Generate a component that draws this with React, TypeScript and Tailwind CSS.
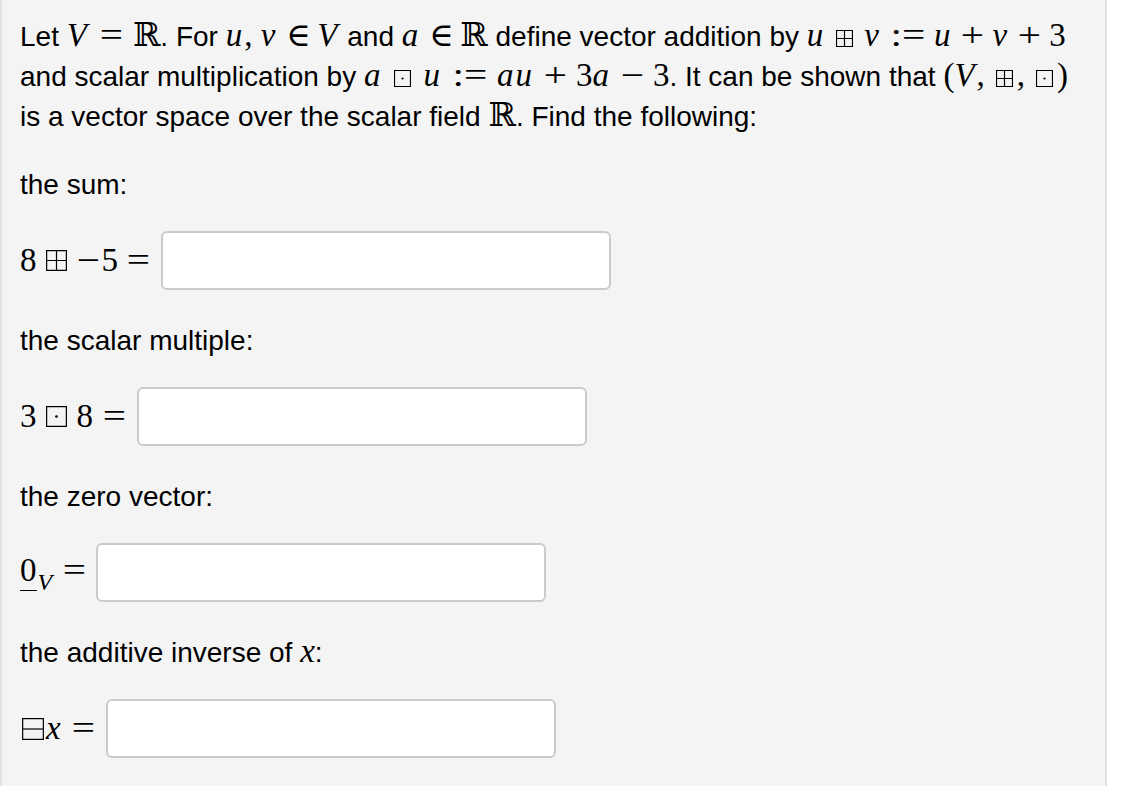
import React from "react"

type BoxKind = "plus" | "dot" | "minus"

function BoxOp({ kind, size, className = "" }: { kind: BoxKind; size: number; className?: string }) {
  return (
    <svg
      width={size}
      height={size}
      viewBox="0 0 20 20"
      fill="none"
      stroke="currentColor"
      strokeWidth={1.2}
      className={`inline-block ${className}`}
    >
      <rect x="0.6" y="0.6" width="18.8" height="18.8" vectorEffect="non-scaling-stroke" />
      {kind === "plus" && <path d="M10 0.6V19.4M0.6 10H19.4" vectorEffect="non-scaling-stroke" />}
      {kind === "minus" && <path d="M0.6 10H19.4" vectorEffect="non-scaling-stroke" />}
      {kind === "dot" && <circle cx="10" cy="10" r="1.3" fill="currentColor" stroke="none" />}
    </svg>
  )
}

// inline math in the paragraph
function M({ children }: { children: React.ReactNode }) {
  return (
    <span className="whitespace-nowrap font-['Liberation_Serif','DejaVu_Serif',serif] text-[33px] leading-none">
      {children}
    </span>
  )
}

// italic variable, a touch wider like TeX math italic
function V({ children, className = "" }: { children: React.ReactNode; className?: string }) {
  return <i className={`mr-[2px] ${className}`}>{children}</i>
}

// relation / binary operator, stretched a little to get the wide TeX look
function Op({ children, className = "" }: { children: React.ReactNode; className?: string }) {
  return (
    <span className={`inline-block text-center ${className}`}>
      <span className="inline-block scale-x-[1.25]">{children}</span>
    </span>
  )
}

function In() {
  return <span className="mx-[9px] inline-block w-[22px] text-center">∈</span>
}

function Answer({ children }: { children: React.ReactNode }) {
  return (
    <div className="mt-[26px] flex items-center">
      <span className="flex items-baseline whitespace-nowrap font-['Liberation_Serif','DejaVu_Serif',serif] text-[33px] leading-none">
        {children}
      </span>
      <input
        type="text"
        className="ml-[11px] h-[59px] w-[450px] rounded-[6px] border-2 border-[#cbcbcb] bg-white px-3 outline-none"
      />
    </div>
  )
}

function Label({ children, first = false }: { children: React.ReactNode; first?: boolean }) {
  return <p className={`${first ? "mt-[28px]" : "mt-[31px]"} leading-[40px]`}>{children}</p>
}

export default function App() {
  return (
    <div className="min-h-screen bg-white">
      <div className="min-h-screen w-[1107px] border-x-2 border-[#e2e2e2] bg-[#f4f4f4] pl-[18px] pr-[12px] pt-[17px] font-['Liberation_Sans',Arial,sans-serif] text-[28px] text-black">
        <p className="leading-[40px]">
          Let{" "}
          <M>
            <V>V</V>
            <Op className="mx-[9px] w-[26px]">=</Op>ℝ
          </M>
          . For{" "}
          <M>
            <V>u</V>, <V>v</V>
            <In />
            <V>V</V>
          </M>{" "}
          and{" "}
          <M>
            <V>a</V>
            <In />ℝ
          </M>{" "}
          define vector addition by{" "}
          <M>
            <V>u</V>
            <BoxOp kind="plus" size={17} className="mx-[11px]" />
            <V>v</V>
            <Op className="mx-[9px] w-[35px]">:=</Op>
            <V>u</V>
            <Op className="mx-[7px] w-[26px]">+</Op>
            <V>v</V>
            <Op className="mx-[7px] w-[26px]">+</Op>3
          </M>
          <br />
          and scalar multiplication by{" "}
          <M>
            <V>a</V>
            <BoxOp kind="dot" size={17} className="mx-[12px]" />
            <V>u</V>
            <Op className="mx-[10px] w-[35px]">:=</Op>
            <V>a</V>
            <V>u</V>
            <Op className="mx-[8px] w-[26px]">+</Op>3<V>a</V>
            <Op className="mx-[8px] w-[26px]">−</Op>3
          </M>
          . It can be shown that{" "}
          <M>
            (<V>V</V>,<BoxOp kind="plus" size={17} className="ml-[11px] mr-[4px]" />,
            <BoxOp kind="dot" size={17} className="ml-[11px] mr-[4px]" />)
          </M>
          <br />
          is a vector space over the scalar field <M>ℝ</M>. Find the following:
        </p>

        <Label first>the sum:</Label>
        <Answer>
          <span>8</span>
          <BoxOp kind="plus" size={21} className="ml-[9px] self-center" />
          <Op className="ml-[11px] w-[22px]">−</Op>
          <span className="ml-[2px]">5</span>
          <Op className="ml-[9px] w-[23px]">=</Op>
        </Answer>

        <Label>the scalar multiple:</Label>
        <Answer>
          <span>3</span>
          <BoxOp kind="dot" size={21} className="ml-[9px] self-center" />
          <span className="ml-[10px]">8</span>
          <Op className="ml-[10px] w-[23px]">=</Op>
        </Answer>

        <Label>the zero vector:</Label>
        <Answer>
          <span className="inline-block border-b-[1.5px] border-black pb-[3px]">0</span>
          <i className="relative top-[9px] ml-[1px] text-[24px]">V</i>
          <Op className="ml-[11px] w-[22px]">=</Op>
        </Answer>

        <Label>
          the additive inverse of <i className="font-['Liberation_Serif',serif] text-[33px] leading-none">x</i>:
        </Label>
        <Answer>
          <BoxOp kind="minus" size={22} className="ml-[2px] self-center" />
          <i className="ml-[2px]">x</i>
          <Op className="ml-[12px] w-[22px]">=</Op>
        </Answer>
        <div className="h-[27px]" />
      </div>
    </div>
  )
}
